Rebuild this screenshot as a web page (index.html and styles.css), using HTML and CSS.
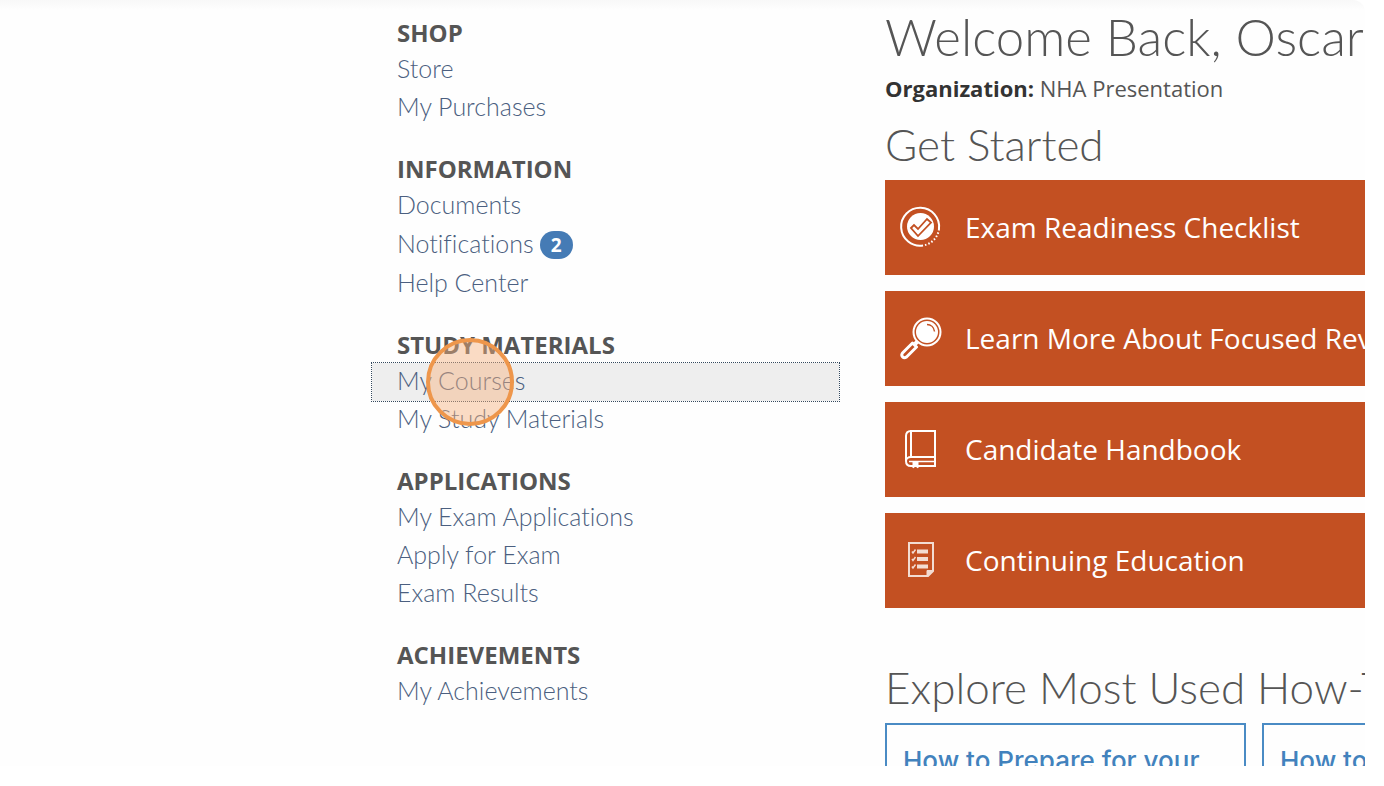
FILE: index.html
```html
<!DOCTYPE html>
<html lang="en">
<head>
<meta charset="utf-8">
<meta name="viewport" content="width=device-width, initial-scale=1">
<title>My Account</title>
<link rel="stylesheet" href="styles.css">
</head>
<body>
<div class="page">
	<nav class="sidebar">
		<h3>Shop</h3>
		<ul>
			<li><a href="#">Store</a></li>
			<li><a href="#">My Purchases</a></li>
		</ul>
		<h3>Information</h3>
		<ul>
			<li><a href="#">Documents</a></li>
			<li><a href="#" class="has-badge">Notifications <span class="badge">2</span></a></li>
			<li><a href="#">Help Center</a></li>
		</ul>
		<h3>Study Materials</h3>
		<ul>
			<li class="current"><a href="#">My Courses</a><span class="click-marker"></span></li>
			<li><a href="#">My Study Materials</a></li>
		</ul>
		<h3>Applications</h3>
		<ul>
			<li><a href="#">My Exam Applications</a></li>
			<li><a href="#">Apply for Exam</a></li>
			<li><a href="#">Exam Results</a></li>
		</ul>
		<h3>Achievements</h3>
		<ul>
			<li><a href="#">My Achievements</a></li>
		</ul>
	</nav>

	<main class="content">
		<h1>Welcome Back, Oscar</h1>
		<p class="organization"><strong>Organization:</strong> NHA Presentation</p>

		<h2>Get Started</h2>
		<div class="actions">
			<a href="#" class="action">
				<svg class="icon" viewBox="0 0 44 44" fill="none" stroke="#fff">
					<path d="M40 24A19 19 0 1 0 24 40.500" stroke-width="2"/>
					<path d="M40 24A19 19 0 0 1 24 40.500" stroke-width="2" stroke-dasharray="1.500 2"/>
					<circle cx="21.500" cy="21.500" r="13.500" fill="#fff" stroke="none"/>
					<path d="M12 23l3-3 4 4 9-10 4 3.500L19 31z" stroke="#c35022" stroke-width="1.800"/>
				</svg>
				Exam Readiness Checklist
			</a>
			<a href="#" class="action">
				<svg class="icon" viewBox="0 0 44 44" fill="none" stroke="#fff">
					<circle cx="28" cy="16" r="13.500" stroke-width="2"/>
					<circle cx="28" cy="16" r="11" fill="#fff" stroke="none"/>
					<path d="M28 8.500c4 0 7 3 7.500 7" stroke="#c35022" stroke-width="1.500"/>
					<path d="M18.500 25.500l-2.500 2.500" stroke-width="4"/>
					<path d="M13.500 27l4 4L7.500 41c-3 2-6-1-4-4z" stroke-width="3" stroke-linejoin="round"/>
				</svg>
				Learn More About Focused Review
			</a>
			<a href="#" class="action">
				<svg class="icon" viewBox="0 0 44 44" fill="none" stroke="#fff" stroke-width="2">
					<path d="M12 4h24v26H12z"/>
					<path d="M12 4C9 4 7 6 7 9v25c0 3 2 5 5 5h24v-9H12c-3 0-5 2-5 4"/>
					<path d="M10 34.500h25" stroke-width="1.500"/>
					<path d="M14 35h5v6l-2.500-2-2.500 2z" fill="#fff" stroke-width="1"/>
				</svg>
				Candidate Handbook
			</a>
			<a href="#" class="action">
				<svg class="icon icon-soft" viewBox="0 0 44 44" fill="none" stroke="#fff" stroke-width="2">
					<path d="M10 5h24v28l-5 5H10z"/>
					<path d="M28 38v-5.500h6z" fill="#fff" stroke-width="1"/>
					<path d="M18 13.500h11M18 21h11M18 28.500h11" stroke-width="4"/>
					<path d="M13 13.500l1 1.500 2.500-3.500M13 21l1 1.500 2.500-3.500M13 28.500l1 1.500 2.500-3.500" stroke-width="1.500"/>
				</svg>
				Continuing Education
			</a>
		</div>

		<h2 class="explore">Explore Most Used How-To's</h2>
		<div class="cards">
			<a href="#" class="card">How to Prepare for your Exam</a>
			<a href="#" class="card">How to Schedule your Exam</a>
		</div>
	</main>
</div>
</body>
</html>
```
FILE: styles.css
```css
* {
	box-sizing: border-box;
}

body {
	margin: 0;
	background: #fff;
	font-family: "Open Sans", sans-serif;
	font-variant-ligatures: none;
	color: #555;
}

a {
	text-decoration: none;
}

.page {
	display: grid;
	grid-template-columns: 467px 1fr;
	gap: 46px;
	height: calc(100vh - 20px);
	margin-right: 19px;
	padding: 15px 0 0 372px;
	overflow: hidden;
	background: linear-gradient(#f8f8f8, #fefefe 10px);
	border-radius: 0 12px 0 0;
}

/* Sidebar */
.sidebar h3 {
	margin: 0;
	padding-left: 25px;
	font-size: 24px;
	line-height: 36px;
	text-transform: uppercase;
	color: #555;
}

.sidebar ul {
	margin: 0 0 24px;
	padding: 0;
	list-style: none;
}

.sidebar li {
	position: relative;
}

.sidebar a {
	display: block;
	padding: 0 0 4px 25px;
	font-family: Lato, sans-serif;
	font-size: 25px;
	font-weight: 300;
	line-height: 34px;
	color: #4b5f80;
}

.sidebar a.has-badge {
	display: flex;
	align-items: center;
	gap: 6px;
	height: 40px;
}

.badge {
	margin-top: 4px;
	padding: 0 11px;
	border-radius: 14px;
	background: #457bb5;
	color: #fff;
	font-family: "Open Sans", sans-serif;
	font-size: 19px;
	font-weight: 700;
	line-height: 28px;
}

.current a {
	background: #eee;
	outline: 1px dotted #34495e;
}

.click-marker {
	position: absolute;
	top: -25px;
	left: 54px;
	width: 88px;
	height: 88px;
	border: 4px solid #ee964b;
	border-radius: 50%;
	background: rgba(247, 178, 126, 0.45);
	z-index: 1;
}

/* Main column */
.content {
	min-width: 0;
	white-space: nowrap;
}

.content h1,
.content h2 {
	margin: 0;
	font-family: Lato, sans-serif;
	font-weight: 300;
	color: #555;
}

.content h1 {
	font-size: 51px;
	line-height: 44px;
}

.content h2 {
	font-size: 44px;
	line-height: 44px;
}

.organization {
	margin: 13px 0 18px;
	font-size: 22px;
	line-height: 32px;
}

.organization strong {
	color: #333;
}

.actions {
	display: flex;
	flex-direction: column;
	gap: 16px;
	margin-top: 14px;
}

.action {
	display: flex;
	align-items: center;
	gap: 22px;
	height: 95px;
	padding: 0 0 2px 14px;
	background: #c35022;
	color: #fff;
	font-size: 28px;
}

.icon {
	width: 44px;
	height: 44px;
	flex: none;
}

.icon-soft {
	opacity: 0.8;
}

.content .explore {
	margin-top: 57px;
}

.cards {
	display: flex;
	gap: 16px;
	margin-top: 14px;
}

.card {
	flex: none;
	width: 361px;
	height: 180px;
	padding: 18px 16px;
	border: 2px solid #4a8bc4;
	color: #4282bd;
	font-family: Inter, sans-serif;
	font-size: 26px;
	font-weight: 500;
	line-height: 36px;
	white-space: normal;
}
```
